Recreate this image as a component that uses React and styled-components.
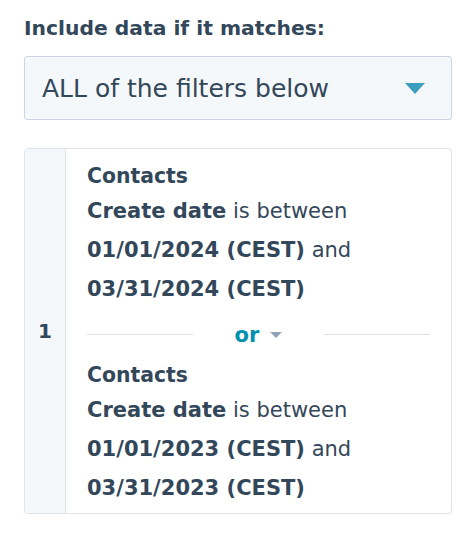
import styled, { createGlobalStyle } from "styled-components";

const GlobalStyle = createGlobalStyle`
  body {
    margin: 0;
    background: #ffffff;
    font-family: "DejaVu Sans", "Liberation Sans", sans-serif;
    color: #33475b;
  }
`;

const Page = styled.div`
  padding: 14px 22px 0 24px;
  width: 428px;
`;

const Label = styled.div`
  font-size: 20.3px;
  font-weight: 700;
  line-height: 28px;
  margin-bottom: 14px;
`;

const Select = styled.div`
  height: 64px;
  box-sizing: border-box;
  background: #f5f8fa;
  border: 1px solid #cbd6e2;
  border-radius: 3px;
  display: flex;
  align-items: center;
  justify-content: space-between;
  padding: 0 26px 0 17px;
  font-size: 25px;
  margin-bottom: 28px;
`;

const Caret = styled.span`
  width: 0;
  height: 0;
  border-left: ${(p) => p.size}px solid transparent;
  border-right: ${(p) => p.size}px solid transparent;
  border-top: ${(p) => Math.round(p.size * 1.05)}px solid ${(p) => p.color};
`;

const Card = styled.div`
  display: flex;
  border: 1px solid #dfe3eb;
  border-radius: 4px;
  overflow: hidden;
`;

const Index = styled.div`
  width: 40px;
  background: #f5f8fa;
  border-right: 1px solid #dfe3eb;
  display: flex;
  align-items: center;
  justify-content: center;
  font-size: 20px;
  font-weight: 700;
`;

const Groups = styled.div`
  flex: 1;
  padding: 12px 21px 5px 21px;
`;

const Title = styled.div`
  font-size: 20.4px;
  font-weight: 700;
  line-height: 31px;
`;

const Rule = styled.div`
  font-size: 21px;
  line-height: 39px;

  b {
    font-weight: 700;
  }
`;

const Divider = styled.div`
  display: flex;
  align-items: center;
  height: 51px;
  gap: 42px;
`;

const Line = styled.div`
  flex: 1;
  height: 1px;
  background: #dfe3eb;
`;

const OrToggle = styled.div`
  display: flex;
  align-items: center;
  gap: 11px;
  color: #0091ae;
  font-size: 21px;
  font-weight: 700;
`;

const groups = [
  { from: "01/01/2024", to: "03/31/2024" },
  { from: "01/01/2023", to: "03/31/2023" },
];

function Group({ from, to }) {
  return (
    <div>
      <Title>Contacts</Title>
      <Rule>
        <b>Create date</b> is between
        <br />
        <b>{from} (CEST)</b> and
        <br />
        <b>{to} (CEST)</b>
      </Rule>
    </div>
  );
}

export default function App() {
  return (
    <>
      <GlobalStyle />
      <Page>
        <Label>Include data if it matches:</Label>
        <Select>
          <span>ALL of the filters below</span>
          <Caret size={10} color="#3d9fbd" />
        </Select>
        <Card>
          <Index>1</Index>
          <Groups>
            <Group {...groups[0]} />
            <Divider>
              <Line />
              <OrToggle>
                or
                <Caret size={6} color="#8ea3b8" />
              </OrToggle>
              <Line />
            </Divider>
            <Group {...groups[1]} />
          </Groups>
        </Card>
      </Page>
    </>
  );
}
